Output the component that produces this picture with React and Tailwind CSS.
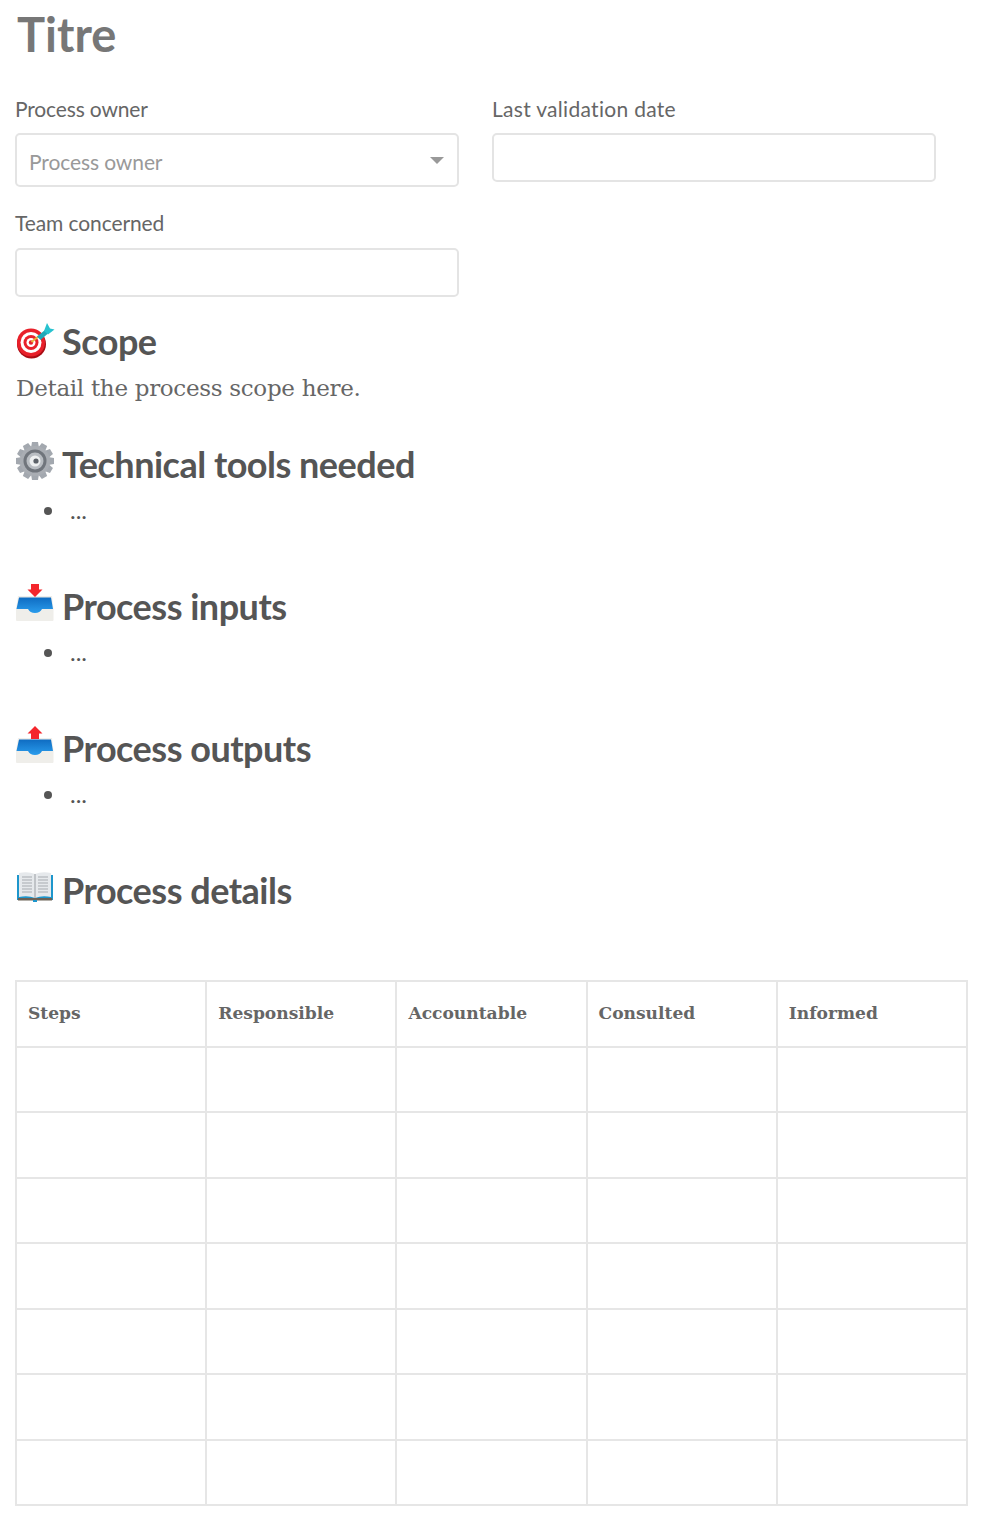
const sansFont = "font-['Lato','Noto_Sans',sans-serif]";
const serifFont = "font-['DejaVu_Serif','Liberation_Serif',serif]";

function TargetIcon() {
  return (
    <svg viewBox="0 0 40 40" className="h-10 w-10 shrink-0">
      <circle cx="16.5" cy="23" r="14.5" fill="#a90d14" />
      <circle cx="16" cy="21.5" r="14" fill="#e8202a" />
      <circle cx="16" cy="21.5" r="10.5" fill="#fff" />
      <circle cx="16" cy="21.5" r="7.5" fill="#e8202a" />
      <circle cx="16" cy="21.5" r="4.5" fill="#fff" />
      <circle cx="16" cy="21.5" r="2.2" fill="#e8202a" />
      <path d="M16.5 21 L24 15" stroke="#e9b13a" strokeWidth="2" />
      <path d="M22 15.5 L30 9 L33 12.5 L25.5 19 Z" fill="#1fa8b8" />
      <path d="M29 10 L32 2 L35 7.5 L39.5 8.5 L33 13.5 Z" fill="#27c2cf" />
    </svg>
  );
}

function GearIcon() {
  const teeth = [0, 30, 60, 90, 120, 150, 180, 210, 240, 270, 300, 330];
  return (
    <svg viewBox="0 0 40 40" className="-mt-[6px] h-10 w-10 shrink-0">
      {teeth.map((a) => (
        <path key={a} d="M17 1 H23 L24.5 10 H15.5 Z" fill="#a3a8af" transform={`rotate(${a} 20 20)`} />
      ))}
      <circle cx="20" cy="20" r="15" fill="#a9adb3" />
      <circle cx="20" cy="20" r="11.5" fill="#70757c" />
      <circle cx="20" cy="20" r="8.5" fill="#b9bdc2" />
      <circle cx="20" cy="20" r="5.5" fill="#eef0f1" />
      <circle cx="21" cy="20" r="2.6" fill="#5d6269" />
    </svg>
  );
}

function TrayIcon({ up }) {
  const gradientId = up ? 'tray-up' : 'tray-down';
  return (
    <svg viewBox="0 0 40 40" className="-mt-[6px] h-10 w-10 shrink-0">
      <defs>
        <linearGradient id={gradientId} x1="0" y1="0" x2="0" y2="1">
          <stop offset="0" stopColor="#0f6cc2" />
          <stop offset="1" stopColor="#2a9cec" />
        </linearGradient>
      </defs>
      <path d="M3 13 H37 L38.5 26 V37 Q38.5 38 37.5 38 H2 Q1 38 1 37 V26 Z" fill="#efeeea" />
      <path d="M4 14.5 H36 L38 26 H27 Q25 30 20 30 Q15 30 13 26 H1.5 Z" fill={`url(#${gradientId})`} />
      {up ? (
        <path d="M20 1 L27.5 8.5 H24 V14 H16 V8.5 H12.5 Z" fill="#f4262c" />
      ) : (
        <path d="M16 1 H24 V6.5 H27.5 L20 14 L12.5 6.5 H16 Z" fill="#f4262c" />
      )}
    </svg>
  );
}

function BookIcon() {
  return (
    <svg viewBox="0 0 40 40" className="-mt-[6px] h-10 w-10 shrink-0">
      <path d="M2 8 H38 V33 H2 Z" fill="#1d96cc" />
      <path d="M4 6 Q13 4 20 7 Q27 4 36 6 V30 Q27 28 20 31 Q13 28 4 30 Z" fill="#e6e9ec" />
      <path d="M20 7 V31" stroke="#9a9ea3" strokeWidth="1" />
      <path d="M7 10 H17 M7 13 H17 M7 16 H17 M7 19 H17 M7 22 H17 M7 25 H17 M23 10 H33 M23 13 H33 M23 16 H33 M23 19 H33 M23 22 H33 M23 25 H33" stroke="#a7abb0" strokeWidth="1" />
      <path d="M3 31 H37 V33.5 H3 Z" fill="#6b6256" />
      <path d="M18 33 H22 V35 H18 Z" fill="#1d96cc" />
    </svg>
  );
}

function Heading({ icon, children, className }) {
  return (
    <h2 className={`flex h-[44px] items-center gap-[7px] pl-[15px] text-[36px] font-bold tracking-[-0.5px] text-[#555] ${sansFont} ${className}`}>
      {icon}
      <span>{children}</span>
    </h2>
  );
}

function Bullet() {
  return (
    <div className={`mt-[5px] flex items-start pl-[44px] text-[24px] leading-[32px] text-[#555] ${sansFont}`}>
      <span className="mt-[16px] h-2 w-2 rounded-full bg-[#555]" />
      <span className="ml-[18px] mt-[3px]">...</span>
    </div>
  );
}

export default function App() {
  const columns = ['Steps', 'Responsible', 'Accountable', 'Consulted', 'Informed'];
  const rows = [1, 2, 3, 4, 5, 6, 7];

  return (
    <div className="min-h-[1536px] w-[982px] bg-white pt-[6px]">
      <h1 className={`pl-[17px] text-[47px] leading-[56px] font-bold text-[#777] ${sansFont}`}>Titre</h1>

      <div className={`mt-[33px] grid grid-cols-[444px_444px] gap-x-[33px] pl-[15px] text-[21px] text-[#666] ${sansFont}`}>
        <div>
          <label className="block leading-[28px] tracking-[-0.15px]">Process owner</label>
          <div className="mt-[10px] flex h-[54px] items-center justify-between rounded-[5px] border-2 border-[#e4e4e4] pl-[12px] pr-[13px]">
            <span className="mt-[3px] tracking-[-0.1px] text-[#999]">Process owner</span>
            <span className="h-0 w-0 border-x-[7px] border-t-[7px] border-x-transparent border-t-[#999]" />
          </div>
        </div>
        <div>
          <label className="block leading-[28px] tracking-[0.3px]">Last validation date</label>
          <input className="mt-[10px] block h-[49px] w-full rounded-[5px] border-2 border-[#e4e4e4]" />
        </div>
        <div className="mt-[22px]">
          <label className="block leading-[28px] tracking-[-0.1px]">Team concerned</label>
          <input className="mt-[11px] block h-[49px] w-full rounded-[5px] border-2 border-[#e4e4e4]" />
        </div>
      </div>

      <Heading icon={<TargetIcon />} className="mt-[22px]">Scope</Heading>
      <p className={`mt-[9px] pl-[16px] text-[23px] leading-[32px] tracking-[-0.3px] text-[#666] ${serifFont}`}>Detail the process scope here.</p>

      <Heading icon={<GearIcon />} className="mt-[38px]">Technical tools needed</Heading>
      <Bullet />

      <Heading icon={<TrayIcon />} className="mt-[58px]">Process inputs</Heading>
      <Bullet />

      <Heading icon={<TrayIcon up />} className="mt-[58px]">Process outputs</Heading>
      <Bullet />

      <Heading icon={<BookIcon />} className="mt-[58px]">Process details</Heading>

      <div className="mt-[68px] pl-[15px]">
        <table className="w-[953px] table-fixed border-collapse">
          <thead>
            <tr className="h-[65.5px]">
              {columns.map((col) => (
                <th key={col} className={`border-2 border-[#e6e6e6] pl-[11px] text-left text-[17.1px] font-bold text-[#666] ${serifFont}`}>{col}</th>
              ))}
            </tr>
          </thead>
          <tbody>
            {rows.map((row) => (
              <tr key={row} className="h-[65.5px]">
                {columns.map((col) => (
                  <td key={col} className="border-2 border-[#e6e6e6]" />
                ))}
              </tr>
            ))}
          </tbody>
        </table>
      </div>
    </div>
  );
}
